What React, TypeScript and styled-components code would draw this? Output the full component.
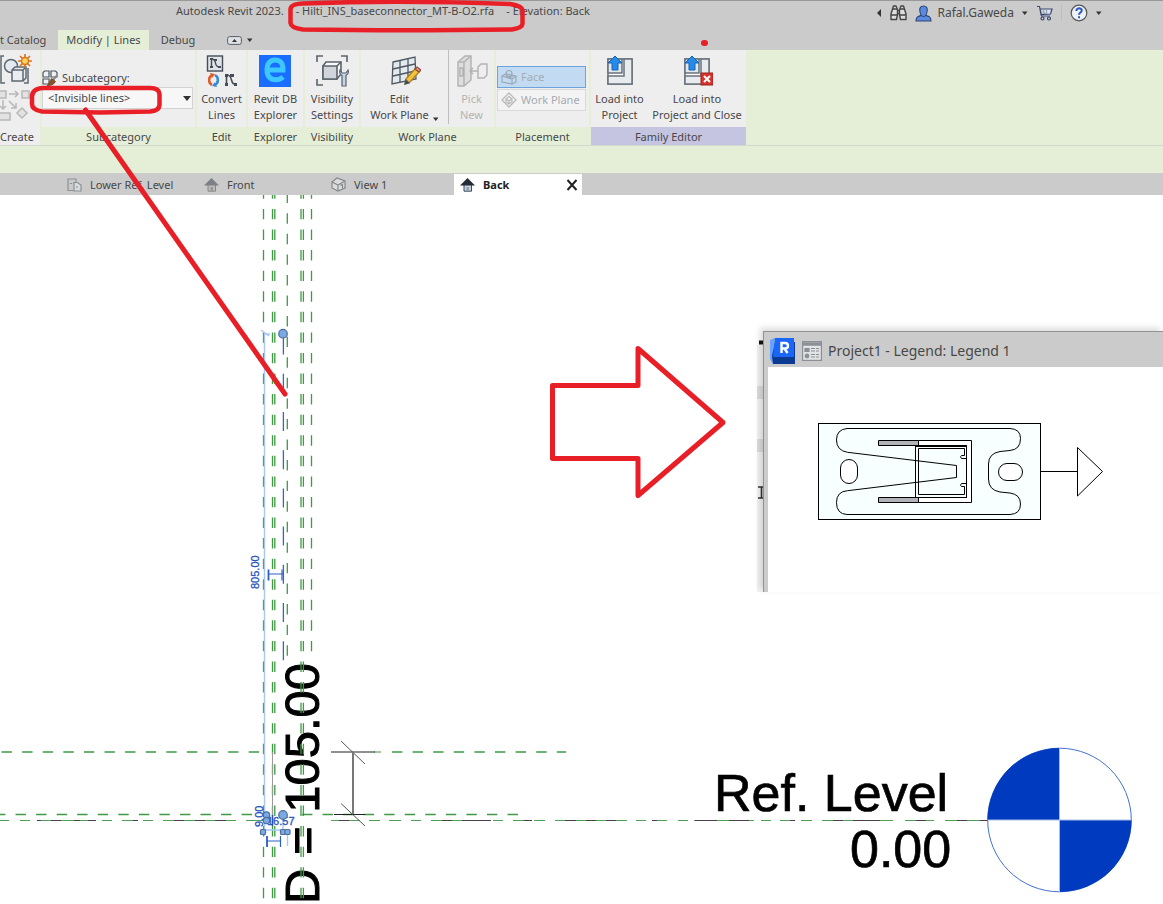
import React from 'react';
import styled, { createGlobalStyle } from 'styled-components';

const GlobalStyle = createGlobalStyle`
  * { box-sizing: border-box; }
  body { margin: 0; background: #fff; }
  button, select { font: inherit; color: inherit; }
  svg { display: block; flex: none; }
`;

const GREEN = '#e5efd8';
const CHROME = '#cbcbcb';
const INK = '#484848';
const RED = '#e81f26';

const Page = styled.div`
  position: relative;
  display: flex;
  flex-direction: column;
  min-height: 100vh;
  overflow: hidden;
  font-family: 'Noto Sans', 'Open Sans', sans-serif;
  font-size: 11px;
  line-height: 16px;
  color: ${INK};
  white-space: nowrap;
`;

const TitleBar = styled.header`
  display: flex;
  align-items: flex-start;
  justify-content: space-between;
  height: 30px;
  padding: 2px 61px 0 176px;
  background: ${CHROME};
  border-top: 1px solid #999;
`;

const TitleText = styled.h1`
  display: flex;
  gap: 12px;
  margin: 0;
  font-size: 11px;
  font-weight: 400;
  line-height: 16px;
`;

const Account = styled.div`
  display: flex;
  align-items: center;
  gap: 8px;
  height: 20px;
  font-size: 12px;
`;

const BareButton = styled.button`
  display: flex;
  align-items: center;
  gap: 5px;
  padding: 0;
  border: 0;
  background: none;
`;

const Divider = styled.span<{ $height: number }>`
  width: 1px;
  height: ${(p) => p.$height}px;
  background: #bdbdbd;
`;

const TabBar = styled.nav`
  display: flex;
  height: 20px;
  background: ${CHROME};
`;

const RibbonTab = styled.button<{ $active?: boolean }>`
  height: 20px;
  padding: 0 ${(p) => (p.$active ? 8 : 12)}px;
  border: 0;
  background: ${(p) => (p.$active ? GREEN : 'transparent')};
  &:first-child { padding-left: 0; }
`;

const RibbonToggle = styled(BareButton)`
  padding-left: 20px;
`;

const Ribbon = styled.section`
  display: flex;
  gap: 2px;
  height: 96px;
  background: ${GREEN};
  border-bottom: 1px solid #d3d8ce;
`;

const Panel = styled.div<{ $width: number }>`
  display: flex;
  flex: none;
  flex-direction: column;
  width: ${(p) => p.$width}px;
`;

const PanelBody = styled.div`
  display: flex;
  justify-content: center;
  height: 77px;
  background: #eee;
`;

const PanelLabel = styled.div<{ $tone?: string; $inset?: number }>`
  display: flex;
  justify-content: center;
  height: 18px;
  padding-right: ${(p) => p.$inset ?? 0}px;
  line-height: 20px;
  background: ${(p) => p.$tone ?? GREEN};
`;

const Tool = styled.button<{ $muted?: boolean; $width?: number }>`
  display: flex;
  flex-direction: column;
  align-items: center;
  width: ${(p) => (p.$width ? `${p.$width}px` : 'auto')};
  padding: 4px 0 0;
  border: 0;
  background: none;
  color: ${(p) => (p.$muted ? '#b3b3b3' : INK)};
  text-align: center;
`;

const ToolLabel = styled.span`
  display: flex;
  align-items: flex-end;
  gap: 4px;
  padding-top: 3px;
`;

const CreateTools = styled.div`
  width: 40px;
  height: 77px;
  overflow: hidden;
`;

const SubcategoryForm = styled.div`
  display: flex;
  flex-direction: column;
  gap: 1px;
  width: 153px;
  padding: 16px 2px 0 0;
`;

const SubcategoryLabel = styled.label`
  display: flex;
  align-items: flex-end;
  gap: 4px;
  height: 20px;
`;

const SelectBox = styled.span`
  display: flex;
  align-items: center;
  height: 22px;
  border: 1px solid #d2d2d2;
  background: #f7f7f7;
`;

const Select = styled.select`
  appearance: none;
  flex: 1;
  min-width: 0;
  padding: 0 5px;
  border: 0;
  background: transparent;
`;

const Placement = styled.div`
  display: flex;
  flex-direction: column;
  gap: 1px;
  width: 100%;
  padding: 16px 3px 0 1px;
`;

const PlacementButton = styled.button<{ $selected?: boolean }>`
  display: flex;
  align-items: center;
  gap: 4px;
  height: 22px;
  padding: 0 3px;
  border: 1px solid ${(p) => (p.$selected ? '#6ba3dc' : '#d9d9d9')};
  background: ${(p) => (p.$selected ? '#c2dbf2' : '#f3f3f3')};
  color: #a5abb1;
`;

const OptionsBar = styled.div`
  height: 27px;
  background: ${GREEN};
`;

const ViewTabs = styled.nav`
  display: flex;
  align-items: flex-end;
  height: 22px;
  padding-left: 61px;
  background: ${CHROME};
`;

const ViewTab = styled.button<{ $width: number; $active?: boolean }>`
  display: flex;
  align-items: center;
  gap: 8px;
  width: ${(p) => p.$width}px;
  height: 21px;
  padding: 0 4px 0 6px;
  border: 0;
  background: ${(p) => (p.$active ? '#fff' : 'transparent')};
  color: ${(p) => (p.$active ? '#222' : INK)};
  font-weight: ${(p) => (p.$active ? 700 : 400)};
`;

const TabName = styled.span`
  flex: 1;
  text-align: left;
`;

const Canvas = styled.main`
  position: relative;
  flex: 1;
  overflow: hidden;
  background: #fff;
`;

const LegendWindow = styled.section`
  position: absolute;
  top: 136px;
  left: 763px;
  right: 0;
  border: solid #929292;
  border-width: 1px 0 0 1px;
  box-shadow: -3px -3px 6px rgba(0, 0, 0, 0.14);
`;

const LegendTitle = styled.h2`
  display: flex;
  align-items: center;
  gap: 6px;
  height: 35px;
  margin: 0;
  padding: 2px 6px 0;
  background: ${CHROME};
  font-size: 14px;
  font-weight: 400;
  line-height: 20px;
`;

const LegendBody = styled.div`
  height: 225px;
  overflow: hidden;
  border-left: 4px solid ${CHROME};
  background: #fff;
`;

const Markup = styled.svg`
  position: absolute;
  top: 0;
  left: 0;
  pointer-events: none;
`;

const Caret = ({ left }: { left?: boolean }) => (
  <svg width="6" height="8" viewBox="0 0 6 8">
    <path d={left ? 'M5 0 L1 4 L5 8Z' : 'M0 2.500h5.500L2.750 6Z'} fill="#333" />
  </svg>
);

const Binoculars = () => (
  <svg width="17" height="16" viewBox="0 0 17 16" fill="#dedede" stroke="#444" strokeWidth="1.400" strokeLinejoin="round">
    <path d="M3.500 1h2.500l1.500 4v4.500L6.500 14.500H1V9Z" />
    <path d="M13.500 1H11L9.500 5v4.500l1 5H16V9Z" />
    <path d="M7.500 5.500h2M7.500 8.500h2M1 10h6M10 10h6M3 4h4M10 4h4" />
  </svg>
);

const User = () => (
  <svg width="17" height="17" viewBox="0 0 17 17" fill="#5b8be0" stroke="#2c4675" strokeWidth="1.100">
    <path d="M1 16c0-4 2-4.500 5-5.500h5c3 1 5 1.500 5 5.500Z" />
    <path d="M8.500 1C5.500 1 4.500 3 4.800 5.500 5 8.500 6.500 11.500 8.500 11.500s3.500-3 3.700-6C12.500 3 11.500 1 8.500 1Z" />
  </svg>
);

const Cart = () => (
  <svg width="17" height="16" viewBox="0 0 17 16" fill="none" stroke="#3a4870" strokeWidth="1.200">
    <path d="M1 1.500h2.500l2 9.500H14M4 4h12l-1.500 5-9.500.500Z" fill="#dfe3ee" />
    <path d="M7.500 4.500l.500 4.500M10.500 4.500v4.500" stroke="#9aa3ba" />
    <circle cx="6.500" cy="13.500" r="1.500" /><circle cx="13" cy="13.500" r="1.500" />
  </svg>
);

const Help = () => (
  <svg width="18" height="18" viewBox="0 0 18 18">
    <circle cx="9" cy="9" r="7.800" fill="#eef1f6" stroke="#555" strokeWidth="1.200" />
    <path d="M6.300 7c0-3.800 5.600-3.300 5.500-.500C11.700 8.500 9 8.600 9 10.800M9 12.200v2" fill="none" stroke="#2b59c3" strokeWidth="2" />
  </svg>
);

const CreateIcon = () => (
  <svg width="40" height="77" viewBox="0 0 40 77" fill="none" stroke="#5e6873" strokeWidth="1.500">
    <path d="M4 6H1v27h4M24 33h4V18" />
    <circle cx="11" cy="16" r="6.500" fill="#e4eaf0" />
    <path d="m12 20 3-3h11v11l-3 3H12ZM12 20h11v11M23 20l3-3" fill="#e9edf1" />
    <path d="M25 4v14M18 11h14M20 6l10 10M30 6 20 16" stroke="#d9741c" strokeWidth="1.600" />
    <circle cx="25" cy="11" r="3.500" fill="#ffd25c" stroke="#d9741c" />
    <g stroke="#b8b8b8">
      <path d="M0 41h6v7H0M22 41h7v7h-7ZM0 63h10v7H0M22 58l5 5-5 5-5-5Z" fill="#e2e2e2" />
      <path d="M9 44h9m-3-3 3 3-3 3M3 50v9m-3-3 3 3 3-3M9 51l7 7m0-5v5h-5" />
    </g>
  </svg>
);

const SubcategoryIcon = () => (
  <svg width="16" height="16" viewBox="0 0 16 16" fill="#eef1f4" stroke="#4c5560" strokeWidth="1.200">
    <path d="M2.500 1H7v6H1V2.500ZM9 1h4.500L15 2.500V7H9ZM1 9h6v5H1Z" />
    <path d="M15 5.500 10 11" stroke="#888" strokeWidth="2" />
    <path d="m9.500 8.500 4 3c-1.500 3-5 4.500-8.500 4 2-1 2.500-4 4.500-7Z" fill="#8a5429" stroke="#68401e" strokeWidth=".8" />
  </svg>
);

const ConvertIcon = () => (
  <svg width="32" height="34" viewBox="0 0 32 34" fill="none" stroke="#444d57">
    <rect x="1.500" y="2" width="15" height="15" fill="#dfe3e7" strokeWidth="1.400" />
    <path d="M5.500 5v9M5.500 5c2 0 3.500 1 4 4s2 4 4 4" strokeWidth="1.400" />
    <path d="M4 4h3v2H4ZM8 5h3v2H8ZM4 12h3v2H4ZM12 12h3v2h-3Z" fill="#444d57" stroke="none" />
    <path d="M20.500 21v10M20.500 21c3 0 4 1 5 5s2 4 5 4" strokeWidth="1.600" />
    <path d="M19 20h3v3h-3ZM24 20h4v3h-4ZM19 29h3v3h-3ZM28 29h3v3h-3Z" fill="#444d57" stroke="none" />
    <path d="M7 21c-5 1-5 8-1 10" stroke="#e2592c" strokeWidth="2.500" /><path d="m4 19 5 1-3 4Z" fill="#e2592c" stroke="none" />
    <path d="M8 31c5-1 5-8 1-10" stroke="#3589d5" strokeWidth="2.500" /><path d="m11 33-5-1 3-4Z" fill="#3589d5" stroke="none" />
  </svg>
);

const ExplorerIcon = () => (
  <svg width="32" height="34" viewBox="0 0 32 34">
    <rect y="1" width="32" height="32" fill="#1b6dff" />
    <path d="M24 23c-2 2-4.500 2.800-7.300 2.800C11 25.800 8 22 8 16 8 9.500 11 6 16.200 6c5.300 0 8 3.500 7.800 10H9.500" fill="none" stroke="#3cc8ff" strokeWidth="5" />
  </svg>
);

const VisibilityIcon = () => (
  <svg width="34" height="34" viewBox="0 0 34 34" fill="none" stroke="#59636e" strokeWidth="1.600">
    <path d="M2 8V2h6M26 2h6v6M2 25v6h6" />
    <path d="m8 12 3-4h15v12l-4 5H8Z" fill="#fafafa" /><path d="M8 12h14v13H8Z" fill="#cfd5da" /><path d="m22 12 4-4" />
    <path d="M25 16c-1 3 0 4.500 2 5.500V32h4V21.500c2-1 3-2.500 2-5.500l-2 3h-4Z" fill="#c4d4e4" strokeWidth="1.200" />
  </svg>
);

const GridIcon = () => (
  <svg width="32" height="34" viewBox="0 0 32 34" fill="none" stroke="#4e5864" strokeWidth="1.300">
    <path d="m4 8 22-5 1 22-24 5Z" fill="#e4e9ee" /><path d="m4 15 22-5M4 22l22-5M11 6.500v22M19 4.500v22" />
    <path d="m17 25 9-10 4 3-9 10-5 2Z" fill="#f4c33d" stroke="#b07f1e" /><path d="m26 15 2-2 4 3-2 2Z" fill="#f29a8a" stroke="#8a4d3c" /><path d="m16 30 1-4 3 3Z" fill="#333" />
  </svg>
);

const PickIcon = () => (
  <svg width="32" height="34" viewBox="0 0 32 34" fill="#ddd" stroke="#b2b2b2" strokeWidth="1.400">
    <path d="m2 8 7-6h6v24l-7 6H2Z" /><path d="M8 8v24M2 8h6l7-6M4 14h3v8H4Z" /><path d="M14 17h8m-5-3-3 3 3 3" fill="none" />
    <path d="m22 13 3-3h6v11l-3 3h-6Z" fill="#eee" />
  </svg>
);

const LoadIcon = ({ close }: { close?: boolean }) => (
  <svg width="32" height="34" viewBox="0 0 32 34" stroke="#68717c" strokeWidth="1.500">
    <path d="M4 5h24v25H4Z" fill="#fff" /><path d="M4 5h14v14H4Z" fill="#e2e7ed" />
    <path d="M20 5h8v25H4v-8h16Z" fill="#e9ecef" /><path d="M4 22h24" fill="none" strokeWidth="0" />
    <path d="m11 2 7 7h-4v7H8V9H4Z" fill="#258be8" stroke="#1764b5" strokeWidth="1" />
    {close && (
      <>
        <rect x="20" y="19" width="12" height="12" fill="#d8322d" stroke="#9d2220" strokeWidth="1" />
        <path d="m23 22 6 6M29 22l-6 6" stroke="#fff" strokeWidth="2" />
      </>
    )}
  </svg>
);

const FaceIcon = () => (
  <svg width="16" height="16" viewBox="0 0 16 16" fill="none" stroke="#9aa9b8" strokeWidth="1.200">
    <path d="m1 7 4-2 10 2v6l-4 2-10-2ZM1 7l10 3 4-3M11 10v5" /><circle cx="8" cy="4.500" r="3" /><path d="m5 7 3 2 4-2" />
  </svg>
);

const DiamondIcon = () => (
  <svg width="16" height="16" viewBox="0 0 16 16" fill="none" stroke="#bbb" strokeWidth="1.300">
    <path d="m8 1 7 7-7 7-7-7Z" /><path d="m8 4.500 3 2.500v3L8 12l-3-2V7ZM5 7l3 2 3-2M8 9v3" />
  </svg>
);

const SheetIcon = () => (
  <svg width="15" height="14" viewBox="0 0 15 14" fill="none" stroke="#8d9297" strokeWidth="1.200">
    <path d="M7 12.500H1V1h8v3" /><path d="M7 4.500h3.500L14 7v6H7Z" fill="#d8dadc" /><path d="M3 5.500h4M9 9h3" strokeDasharray="2 1" />
  </svg>
);

const HouseIcon = ({ dark }: { dark?: boolean }) => (
  <svg width="15" height="14" viewBox="0 0 15 14">
    <path d="M4 6.500h7.500v6.700H4Z" fill={dark ? '#c9d0d8' : '#bbb'} stroke={dark ? '#3b4a5c' : '#888'} />
    <path d="M7.500 0 15 7.500H0Z" fill={dark ? '#252b36' : '#7d8187'} /><path d="M6.500 9h2.500v4H6.500Z" fill={dark ? '#8fa0b2' : '#999'} />
  </svg>
);

const CubeIcon = () => (
  <svg width="15" height="15" viewBox="0 0 15 15" fill="#dcdcdc" stroke="#85898d" strokeWidth="1.200">
    <path d="m1 5 5-4 8 3v7l-7 3-6-3Z" /><path d="m1 5 6 3 7-4M7 8v6M9.500 8.500l2-1v4" fill="none" />
  </svg>
);

const CrossIcon = () => (
  <svg width="12" height="12" viewBox="0 0 12 12" stroke="#222" strokeWidth="2"><path d="m1.500 1 9 10M10.500 1l-9 10" /></svg>
);

const RevitIcon = () => (
  <svg width="26" height="28" viewBox="0 0 26 28">
    <path d="M5 1 0 3v19l3 5V17Z" fill="#6aa2ff" /><path d="M2 19 5 5h20v22H3Z" fill="#0a3a92" />
    <path d="M5 1h19v19H3Z" fill="#1a66f8" />
    <path d="M11.500 16V6h3.500c4 0 4 5.500 0 5.500h-3.500M14.500 11.500l3 4.500" fill="none" stroke="#fff" strokeWidth="2.400" />
  </svg>
);

const LegendIcon = () => (
  <svg width="20" height="20" viewBox="0 0 20 20" fill="none" stroke="#8b9096" strokeWidth="1.200">
    <rect x=".6" y=".6" width="18.800" height="18.800" fill="#e2e3e4" /><path d="M1 3h18" strokeWidth="3.500" />
    <path d="M3 7.500h4v3H3Z" fill="#8b9096" /><circle cx="5" cy="15" r="1.800" fill="#8b9096" />
    <path d="M9 7.500h8M9 10h8M9 13.500h8M9 16h8" strokeDasharray="4 1" />
  </svg>
);

const verticals = [263.5, 272.5, 274.8, 301, 303.4, 311.5];
const levelDashes = [
  [0, 9], [20, 30], [37, 96], [102, 112], [122, 138], [143, 153], [163, 236], [246, 264], [331, 360],
  [369, 380], [389, 401], [411, 421], [431, 491], [493, 503], [513, 532], [534, 545], [555, 627],
  [636, 646], [652, 667], [678, 688], [694, 754], [761, 771], [780, 795], [801, 812], [822, 893],
  [905, 934], [945, 988],
];
const levelDark = [
  [37, 41], [51, 61], [74, 80], [88, 96], [133, 138], [174, 184], [195, 205], [215, 226], [339, 349],
  [442, 452], [462, 491], [524, 532], [565, 576], [586, 596], [606, 616], [652, 657], [695, 717],
  [729, 749], [790, 795], [833, 843], [853, 880], [916, 926], [957, 967], [980, 988],
];

const spans = (list: number[][], y: number) => list.map(([a, b]) => `M${a} ${y}H${b}`).join('');

/* The elevation is drawn in window units; its first row is y = 195. */
const Elevation = () => (
  <svg width="1163" height="709" viewBox="0 195 1163 709" fill="none" fontFamily="'Liberation Sans', Arial, sans-serif">
    <text transform="translate(319 904) rotate(-90)" fontSize="49" fill="#000" stroke="#000" strokeWidth="1">D = 105.00</text>
    <g stroke="#3f9a43" strokeWidth="1.300" strokeDasharray="10.400 10.170">
      {verticals.map((x) => (
        <path key={x} d={`M${x} 188.400V${x > 310 ? 652 : 899}`} />
      ))}
      <path d="M287.300 192.700V658" />
      <path d="M1.500 752H262M392 752H566" strokeDasharray="10.400 10.200" />
      <path d="M-5 814.500H262M302 814.500H523" strokeDasharray="10.400 10.150" />
    </g>
    <path d={spans(levelDashes, 820.5)} stroke="#4fa052" strokeWidth="1.200" />
    <path d={spans(levelDark, 820.5)} stroke="#4c3f4c" strokeWidth="1.200" />
    <path d="M374 752h7" stroke="#3f9a43" />
    <path d="M331 752h44M334 814.500h31" stroke="#222" strokeWidth="1.200" />
    <path d="M341 741l24 23M341 803.500l24 22.500" stroke="#555" />
    <path d="M353 752v62" stroke="#777" strokeWidth="2" />
    <path d="M272.500 752v68" stroke="#999" />

    <path d="M264.500 334V836M261 330l8 6M264 334h6M263 830h25M283 815v17M287.500 832v14" stroke="#a9c6f6" strokeWidth="1.400" />
    <path d="M283.400 335.500V394M283.400 412V661" stroke="#3a63bf" strokeWidth="1.300" strokeDasharray="19 19.200" />
    <g stroke="#2f5dc0">
      <path d="M269 574h14M267 841h13" /><path d="M268.500 569.500v11M267 836v11" strokeWidth="1.800" /><path d="M282 569.500v11M280.500 836v11" strokeWidth="1.200" />
    </g>
    <g fill="#2651bd" fontSize="11" stroke="#2651bd" strokeWidth=".3">
      <text transform="translate(259 589) rotate(-90)">805.00</text>
      <text transform="translate(263 827) rotate(-90)">9.00</text>
      <text x="267" y="825">16.57</text>
    </g>
    <path d="M272.500 815v11" stroke="#2651bd" strokeWidth="1.500" />
    <g fill="#7ba9e2" stroke="#4e6f9c" strokeWidth="1.200">
      <circle cx="283" cy="333.700" r="4.300" /><circle cx="283" cy="815" r="4.300" />
      <circle cx="266.500" cy="815" r="3.200" /><circle cx="266.500" cy="820.500" r="3.200" />
      <rect x="260.500" y="829.500" width="5" height="5" rx="1" /><rect x="280.500" y="829.500" width="5" height="5" rx="1" /><rect x="285" y="829.500" width="5" height="5" rx="1" />
    </g>

    <g fill="#000" stroke="#000" strokeWidth=".7" fontSize="52">
      <text x="714" y="811">Ref. Level</text>
      <text x="850" y="867">0.00</text>
    </g>
    <circle cx="1059.500" cy="820" r="71.800" stroke="#4470cf" />
    <path d="M1059.500 820V748A72 72 0 0 0 987.500 820ZM1059.500 820V892A72 72 0 0 0 1131.500 820Z" fill="#003abf" />
    <path d="M1059.500 748V892M987.500 820H1131.500" stroke="#a8bde8" />

    <path d="M759 340.500h5v4h-5z" fill="#111" />
    <path d="M757 345h7v247h-7z" fill="#f2f2f2" />
    <path d="M757 386h7v13h-7zM757 439h7v13h-7z" fill="#dcdcdc" />
    <path d="M758 487h6M758 498h6M761.500 487v11" stroke="#333" strokeWidth="1.600" />
  </svg>
);

/* The legend sheet shares the same units, so its origin is the sheet's corner. */
const LegendDrawing = () => (
  <svg width="395" height="225" viewBox="768 367 395 225" fill="none" stroke="#000" strokeWidth="1">
    <rect x="818.500" y="423.500" width="222" height="96" fill="#f8ffff" />
    <path d="M847 428.500H1010Q1020.500 429 1020.500 438.500Q1020.500 449.500 1010 450.500L1000 451.500Q988.500 453.500 988.500 464V479Q988.500 490 1000 492L1010 493Q1020.500 494.500 1020.500 504Q1020.500 514 1010 514.500H847Q836.500 514 836.500 502.500Q836.500 491.500 847.500 490.700L956.500 477.500V465.500L847.500 452.300Q836.500 450.500 836.500 440Q836.500 429.500 847 428.500Z" fill="#f8ffff" />
    <rect x="840.500" y="459.500" width="17" height="24" rx="8.500" fill="#fff" />
    <rect x="998.500" y="463.500" width="24" height="17" rx="8.500" fill="#fff" />
    <path d="M918.500 440.500H971.500V502.500H918.500V497.500H966.500V445.500H918.500Z" fill="#fff" />
    <path d="M878.500 440.500h40v5h-40ZM878.500 497.500h40v5h-40Z" fill="#b0b4b8" />
    <path d="M915.500 445.500H966.500V497.500H915.500ZM918.500 448.500H964.500V455.500H961.500Q959.500 456.500 961.500 458.500H966M918.500 448.500V494.500H964.500V486.500H961.500Q959.500 485.500 961.500 483.500H966" />
    <path d="M915.500 446.500H966.500M1040.500 471.500H1077.500M1077.500 447.500L1102.500 471.500L1077.500 496Z" />
  </svg>
);

export default function App() {
  return (
    <Page>
      <GlobalStyle />
      <TitleBar>
        <TitleText>
          <span>Autodesk Revit 2023.</span>
          <span>- Hilti_INS_baseconnector_MT-B-O2.rfa</span>
          <span>- Elevation: Back</span>
        </TitleText>
        <Account>
          <Caret left />
          <Binoculars />
          <BareButton><User />Rafal.Gaweda</BareButton>
          <Caret />
          <Cart />
          <Divider $height={16} />
          <Help />
          <Caret />
        </Account>
      </TitleBar>
      <TabBar>
        <RibbonTab>t Catalog</RibbonTab>
        <RibbonTab $active>Modify | Lines</RibbonTab>
        <RibbonTab>Debug</RibbonTab>
        <RibbonToggle aria-label="Minimize ribbon">
          <svg width="15" height="9" viewBox="0 0 15 9"><rect x=".6" y=".6" width="13.800" height="7.800" rx="2" fill="#dde1e5" stroke="#555f69" /><path d="M5 6h5L7.500 3Z" fill="#333" /></svg>
          <Caret />
        </RibbonToggle>
      </TabBar>
      <Ribbon>
        <Panel $width={40}>
          <PanelBody><CreateTools><CreateIcon /></CreateTools></PanelBody>
          <PanelLabel $tone="#eee" $inset={6}>Create</PanelLabel>
        </Panel>
        <Panel $width={153}>
          <PanelBody>
            <SubcategoryForm>
              <SubcategoryLabel htmlFor="subcategory"><SubcategoryIcon />Subcategory:</SubcategoryLabel>
              <SelectBox>
                <Select id="subcategory"><option>&lt;Invisible lines&gt;</option></Select>
                <svg width="9" height="5" viewBox="0 0 9 5"><path d="M0 0h8L4 5Z" fill="#333" /></svg>
              </SelectBox>
            </SubcategoryForm>
          </PanelBody>
          <PanelLabel>Subcategory</PanelLabel>
        </Panel>
        <Panel $width={49}>
          <PanelBody><Tool><ConvertIcon /><ToolLabel>Convert<br />Lines</ToolLabel></Tool></PanelBody>
          <PanelLabel>Edit</PanelLabel>
        </Panel>
        <Panel $width={55}>
          <PanelBody><Tool><ExplorerIcon /><ToolLabel>Revit DB<br />Explorer</ToolLabel></Tool></PanelBody>
          <PanelLabel>Explorer</PanelLabel>
        </Panel>
        <Panel $width={54}>
          <PanelBody><Tool><VisibilityIcon /><ToolLabel>Visibility<br />Settings</ToolLabel></Tool></PanelBody>
          <PanelLabel>Visibility</PanelLabel>
        </Panel>
        <Panel $width={133}>
          <PanelBody>
            <Tool $width={87}><GridIcon /><ToolLabel><span>Edit<br />Work Plane</span><Caret /></ToolLabel></Tool>
            <Divider $height={74} />
            <Tool $muted $width={45}><PickIcon /><ToolLabel>Pick<br />New</ToolLabel></Tool>
          </PanelBody>
          <PanelLabel>Work Plane</PanelLabel>
        </Panel>
        <Panel $width={93}>
          <PanelBody>
            <Placement>
              <PlacementButton $selected><FaceIcon />Face</PlacementButton>
              <PlacementButton><DiamondIcon />Work Plane</PlacementButton>
            </Placement>
          </PanelBody>
          <PanelLabel>Placement</PanelLabel>
        </Panel>
        <Panel $width={155}>
          <PanelBody>
            <Tool $width={57}><LoadIcon /><ToolLabel>Load into<br />Project</ToolLabel></Tool>
            <Tool $width={98}><LoadIcon close /><ToolLabel>Load into<br />Project and Close</ToolLabel></Tool>
          </PanelBody>
          <PanelLabel $tone="#c5c5e2">Family Editor</PanelLabel>
        </Panel>
      </Ribbon>
      <OptionsBar />
      <ViewTabs>
        <ViewTab $width={137}><SheetIcon /><TabName>Lower Ref. Level</TabName></ViewTab>
        <ViewTab $width={127}><HouseIcon /><TabName>Front</TabName></ViewTab>
        <ViewTab $width={129}><CubeIcon /><TabName>View 1</TabName></ViewTab>
        <ViewTab $width={128} $active><HouseIcon dark /><TabName>Back</TabName><CrossIcon /></ViewTab>
      </ViewTabs>
      <Canvas>
        <Elevation />
        <LegendWindow>
          <LegendTitle><RevitIcon /><LegendIcon />Project1 - Legend: Legend 1</LegendTitle>
          <LegendBody><LegendDrawing /></LegendBody>
        </LegendWindow>
      </Canvas>
      <Markup width="740" height="510" viewBox="0 0 740 510" fill="none" stroke={RED} strokeWidth="4.500" strokeLinejoin="round" strokeLinecap="round">
        <path d="M303 3.500Q291 4 290.500 9V23Q291 28 303 29.500Q400 31 512 29.500Q522 28 522.500 24V10Q522 6 510 4Q400 0 303 3.500Z" />
        <path d="M42 88H150Q159 88 159.500 94V105Q159 111 150 111.500L100 112.500L42 111.500Q32 110 32 104V97Q32 89 42 88Z" />
        <path d="M85.500 110L285 394" strokeWidth="5" />
        <path d="M552.500 385.500H638V348.500L723 422.500L638 495.500V458.500H552.500Z" strokeWidth="5" />
        <path d="M704 43h1" strokeWidth="6" />
      </Markup>
    </Page>
  );
}
